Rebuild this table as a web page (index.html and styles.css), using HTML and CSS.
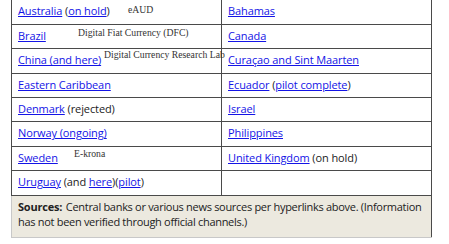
FILE: index.html
```html
<!DOCTYPE html>
<html>
<head>
<meta charset="utf-8">
<link rel="stylesheet" href="styles.css">
</head>
<body>
<table class="cbdc">
  <tr class="row first">
    <td class="cell note-host"><a href="#">Australia</a> (<a href="#">on hold</a>)<span class="note note-aud">eAUD</span></td>
    <td class="cell"><a href="#">Bahamas</a></td>
  </tr>
  <tr class="row">
    <td class="cell note-host"><a href="#">Brazil</a><span class="note note-dfc">Digital Fiat Currency (DFC)</span></td>
    <td class="cell"><a href="#">Canada</a></td>
  </tr>
  <tr class="row">
    <td class="cell note-host"><a href="#">China (and here)</a><span class="note note-lab">Digital Currency Research Lab</span></td>
    <td class="cell"><a href="#">Curaçao and Sint Maarten</a></td>
  </tr>
  <tr class="row">
    <td class="cell"><a href="#">Eastern Caribbean</a></td>
    <td class="cell"><a href="#">Ecuador</a> (<a href="#">pilot complete</a>)</td>
  </tr>
  <tr class="row">
    <td class="cell"><a href="#">Denmark</a> (rejected)</td>
    <td class="cell"><a href="#">Israel</a></td>
  </tr>
  <tr class="row">
    <td class="cell"><a href="#">Norway (ongoing)</a></td>
    <td class="cell"><a href="#">Philippines</a></td>
  </tr>
  <tr class="row light-top">
    <td class="cell note-host"><a href="#">Sweden</a><span class="note note-krona">E-krona</span></td>
    <td class="cell"><a href="#">United Kingdom</a> (on hold)</td>
  </tr>
  <tr class="row">
    <td class="cell"><a href="#">Uruguay</a> (and <a href="#">here</a>)(<a href="#">pilot</a>)</td>
    <td class="cell"></td>
  </tr>
  <tr class="sources-row">
    <td class="sources" colspan="2"><b class="sources-label">Sources:</b> Central banks or various news sources per hyperlinks above. (Information has not been verified through official channels.)</td>
  </tr>
</table>
</body>
</html>
```
FILE: styles.css
```css
html, body {
  margin: 0;
  padding: 0;
  background: #ffffff;
}
body {
  padding-left: 11px;
  font-family: "Open Sans", "Noto Sans", sans-serif;
  font-size: 11px;
  letter-spacing: -0.1px;
  color: #222;
}
.cbdc {
  border-collapse: collapse;
  width: 421px;
  table-layout: fixed;
}
.cell {
  width: 50%;
  height: 24.375px;
  box-sizing: border-box;
  padding: 3px 6px 3px 6px;
  border: 1px solid #4a4a4a;
  vertical-align: top;
  line-height: 16px;
  white-space: nowrap;
}
.first .cell {
  border-top: none;
}
.light-top .cell {
  border-top-color: #bdbdbd;
}
a {
  color: #1414e6;
  text-decoration: underline;
}
.note-host {
  position: relative;
}
.note {
  position: absolute;
  font-family: "Liberation Serif", "Times New Roman", serif;
  font-size: 9.7px;
  letter-spacing: 0;
  color: #333;
  line-height: 12px;
  white-space: nowrap;
}
.note-aud { left: 116px; top: 4px; }
.note-dfc { left: 66px; top: 2px; }
.note-lab { left: 92px; top: 0px; }
.note-krona { left: 62px; top: 1px; }
.sources {
  background: #ece9df;
  padding: 3px 6px 8px 6px;
  line-height: 15px;
  letter-spacing: -0.3px;
  border-left: 1px solid #c8c8c8;
  border-right: 1px solid #4a4a4a;
  border-top: 1px solid #4a4a4a;
  border-bottom: 1px solid #c8c8c8;
  color: #222;
}
.sources-label {
  font-weight: 700;
  letter-spacing: -0.2px;
  margin-right: 1px;
}
```
